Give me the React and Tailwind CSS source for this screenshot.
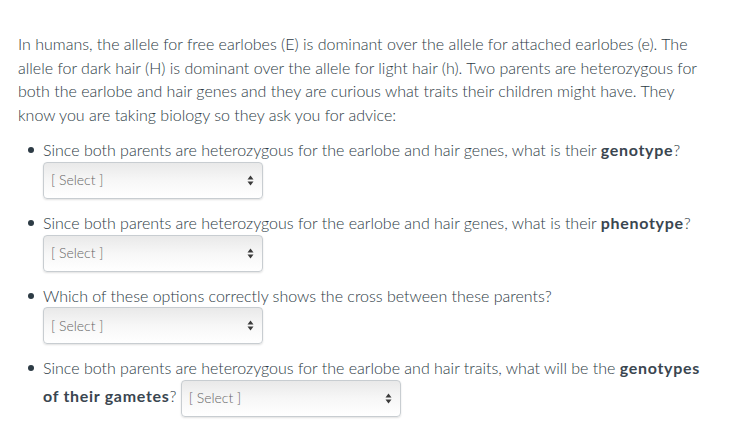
import React from 'react';

const SelectBox = ({ className = '' }) => (
    <span className={`inline-flex items-center justify-between w-[220px] h-[37px] pl-[7px] pr-[8px] rounded-[4px] border border-[#c8cdd1] bg-gradient-to-b from-[#e9e9e9] via-[#f7f7f7] to-[#ffffff] shadow-[0_1px_2px_rgba(0,0,0,0.12)] align-middle ${className}`}>
        <span className="text-[14px] text-[#666] leading-none font-light whitespace-pre">[ Select ]</span>
        <svg width="7" height="11" viewBox="0 0 7 11">
            <path d="M3.5 0.5 L6.5 4.5 H0.5 Z" fill="#3a3a3a" />
            <path d="M3.5 10.5 L6.5 6.5 H0.5 Z" fill="#3a3a3a" />
        </svg>
    </span>
);

const Item = ({ children }) => (
    <li className="relative pl-[25px] mb-[12px]">
        <span className="absolute left-[10px] top-[9px] w-[6px] h-[6px] rounded-full bg-[#2d3b45]" />
        {children}
    </li>
);

const Strong = ({ children }) => (
    <b className="font-bold tracking-[0.7px] text-[#3a4650]">{children}</b>
);

export default function App() {
    return (
        <div className="min-h-screen w-full bg-white pt-[32px] pl-[18px] pr-[20px] text-[#2d3b45] text-[16px] leading-[23.6px] font-light" style={{ fontFamily: 'Lato, "Open Sans", sans-serif' }}>
            <p className="w-[690px] mb-[12px]">
                In humans, the allele for free earlobes (E) is dominant over the allele for attached earlobes (e). The allele for dark hair (H) is dominant over the allele for light hair (h). Two parents are heterozygous for both the earlobe and hair genes and they are curious what traits their children might have. They know you are taking biology so they ask you for advice:
            </p>
            <ul>
                <Item>
                    <div>Since both parents are heterozygous for the earlobe and hair genes, what is their <Strong>genotype</Strong>?</div>
                    <SelectBox />
                </Item>
                <Item>
                    <div>Since both parents are heterozygous for the earlobe and hair genes, what is their <Strong>phenotype</Strong>?</div>
                    <SelectBox />
                </Item>
                <Item>
                    <div>Which of these options correctly shows the cross between these parents?</div>
                    <SelectBox />
                </Item>
                <Item>
                    <div className="w-[665px]">
                        Since both parents are heterozygous for the earlobe and hair traits, what will be the <Strong>genotypes of their gametes</Strong>? <SelectBox className="w-[215px]" />
                    </div>
                </Item>
            </ul>
        </div>
    );
}
